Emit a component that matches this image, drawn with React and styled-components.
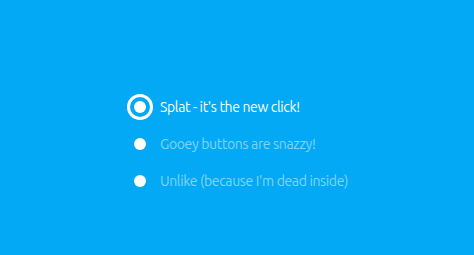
import React, { useState } from "react";
import styled, { createGlobalStyle } from "styled-components";

const GlobalStyle = createGlobalStyle`
  html, body {
    margin: 0;
    padding: 0;
    background: #03A9F4;
  }
  body {
    font-family: Ubuntu, "Open Sans", "Liberation Sans", sans-serif;
  }
`;

const Page = styled.div`
  width: 474px;
  height: 255px;
  background: #03A9F4;
  display: flex;
  align-items: flex-start;
  padding: 94px 0 0 127px;
  box-sizing: border-box;
`;

const List = styled.ul`
  list-style: none;
  margin: 0;
  padding: 0;
  display: flex;
  flex-direction: column;
  gap: 11px;
`;

const Row = styled.li`
  display: flex;
  align-items: center;
  gap: 7px;
  height: 26px;
  cursor: pointer;
`;

const Dot = styled.span`
  width: 26px;
  height: 26px;
  box-sizing: border-box;
  border-radius: 50%;
  border: 3px solid ${(p) => (p.$active ? "#fff" : "transparent")};
  display: flex;
  align-items: center;
  justify-content: center;
  &::after {
    content: "";
    width: 12px;
    height: 12px;
    border-radius: 50%;
    background: #fff;
  }
`;

const Label = styled.span`
  font-size: 14px;
  letter-spacing: -0.35px;
  color: ${(p) => (p.$active ? "#fff" : "rgba(255, 255, 255, 0.5)")};
`;

const options = [
  "Splat - it's the new click!",
  "Gooey buttons are snazzy!",
  "Unlike (because I'm dead inside)",
];

export default function App() {
  const [active, setActive] = useState(0);
  return (
    <>
      <GlobalStyle />
      <Page>
        <List>
          {options.map((o, i) => (
            <Row key={o} onClick={() => setActive(i)}>
              <Dot $active={active === i} />
              <Label $active={active === i}>{o}</Label>
            </Row>
          ))}
        </List>
      </Page>
    </>
  );
}
